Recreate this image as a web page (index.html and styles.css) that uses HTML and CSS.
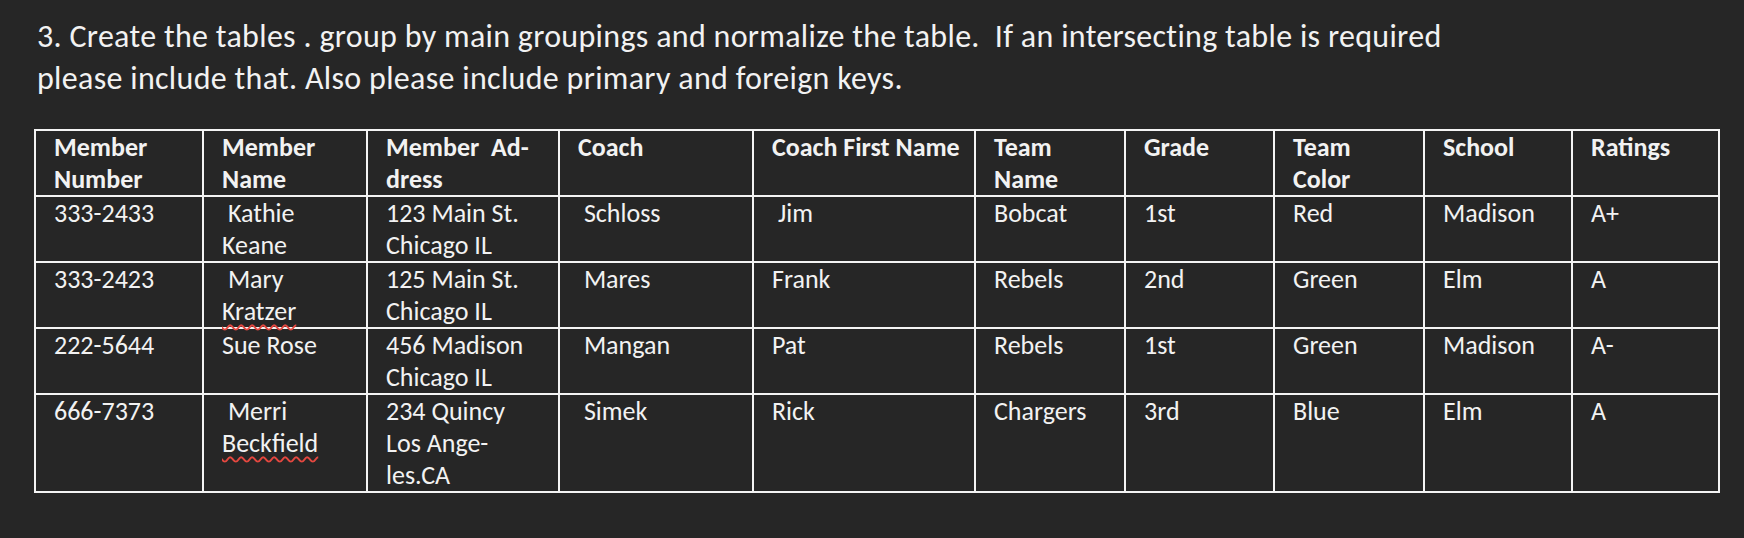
FILE: index.html
```html
<!DOCTYPE html>
<html lang="en">
<head>
<meta charset="utf-8">
<title>Normalize tables</title>
<link rel="stylesheet" href="styles.css">
</head>
<body>
<div class="page">
  <p class="prompt">3. Create the tables . group by main groupings and normalize the table.&nbsp; If an intersecting table is required<br>please include that. Also please include primary and foreign keys.</p>
  <table class="grid">
    <colgroup>
      <col class="c1"><col class="c2"><col class="c3"><col class="c4"><col class="c5">
      <col class="c6"><col class="c7"><col class="c8"><col class="c9"><col class="c10">
    </colgroup>
    <thead>
      <tr>
        <th>Member<br>Number</th>
        <th>Member<br>Name</th>
        <th>Member&nbsp; Ad-<br>dress</th>
        <th>Coach</th>
        <th>Coach First Name</th>
        <th>Team<br>Name</th>
        <th>Grade</th>
        <th>Team<br>Color</th>
        <th>School</th>
        <th>Ratings</th>
      </tr>
    </thead>
    <tbody>
      <tr>
        <td>333-2433</td>
        <td>&nbsp;Kathie<br>Keane</td>
        <td>123 Main St.<br>Chicago IL</td>
        <td>&nbsp;Schloss</td>
        <td>&nbsp;Jim</td>
        <td>Bobcat</td>
        <td>1st</td>
        <td>Red</td>
        <td>Madison</td>
        <td>A+</td>
      </tr>
      <tr>
        <td>333-2423</td>
        <td>&nbsp;Mary<br><span class="spell">Kratzer</span></td>
        <td>125 Main St.<br>Chicago IL</td>
        <td>&nbsp;Mares</td>
        <td>Frank</td>
        <td>Rebels</td>
        <td>2nd</td>
        <td>Green</td>
        <td>Elm</td>
        <td>A</td>
      </tr>
      <tr>
        <td>222-5644</td>
        <td>Sue Rose</td>
        <td>456 Madison<br>Chicago IL</td>
        <td>&nbsp;Mangan</td>
        <td>Pat</td>
        <td>Rebels</td>
        <td>1st</td>
        <td>Green</td>
        <td>Madison</td>
        <td>A-</td>
      </tr>
      <tr>
        <td>666-7373</td>
        <td>&nbsp;Merri<br><span class="spell">Beckfield</span></td>
        <td>234 Quincy<br>Los Ange-<br>les.CA</td>
        <td>&nbsp;Simek</td>
        <td>Rick</td>
        <td>Chargers</td>
        <td>3rd</td>
        <td>Blue</td>
        <td>Elm</td>
        <td>A</td>
      </tr>
    </tbody>
  </table>
</div>
</body>
</html>
```

FILE: styles.css
```css
html, body {
  margin: 0;
  padding: 0;
  background: #262626;
}

body {
  font-family: "Carlito", "Lato", "Liberation Sans", sans-serif;
  color: #f2f2f2;
}

.page {
  width: 1744px;
  height: 538px;
  padding: 16px 0 0 34px;
  box-sizing: border-box;
}

.prompt {
  margin: 0 0 28px 3px;
  font-size: 32px;
  letter-spacing: 0.31px;
  line-height: 42.3px;
  white-space: nowrap;
}

.grid {
  border-collapse: collapse;
  table-layout: fixed;
  width: 1686px;
  font-size: 26px;
  line-height: 32px;
}

.grid th,
.grid td {
  border: 2px solid #f4f4f4;
  padding: 0 4px 0 18px;
  text-align: left;
  vertical-align: top;
  white-space: nowrap;
}

.grid th {
  font-weight: 600;
}

.c1 { width: 168px; }
.c2 { width: 164px; }
.c3 { width: 192px; }
.c4 { width: 194px; }
.c5 { width: 222px; }
.c6 { width: 150px; }
.c7 { width: 149px; }
.c8 { width: 150px; }
.c9 { width: 148px; }
.c10 { width: 147px; }

.spell {
  text-decoration: underline wavy #e5473f;
  text-decoration-thickness: 1.5px;
  text-underline-offset: 4px;
}
```
